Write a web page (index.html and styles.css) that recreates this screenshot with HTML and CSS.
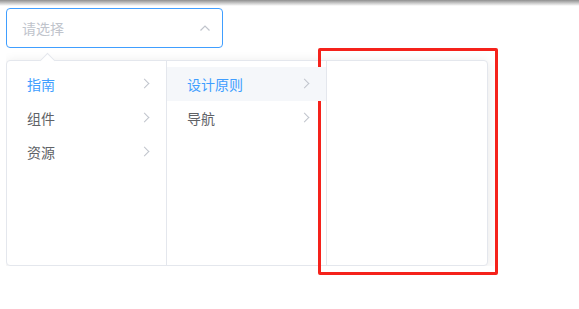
FILE: index.html
```html
<!DOCTYPE html>
<html lang="zh">
<head>
    <meta charset="UTF-8">
    <title>级联选择</title>
    <link rel="stylesheet" href="styles.css">
</head>
<body>
    <div class="top-shade"></div>

    <!-- 选择框 -->
    <div class="cascader">
        <div class="cascader-input">
            <span class="placeholder">请选择</span>
            <svg class="caret" width="14" height="14" viewBox="0 0 14 14">
                <path d="M2.5 9.5 L7 5 L11.5 9.5" fill="none" stroke="#c0c4cc" stroke-width="1.2"/>
            </svg>
        </div>

        <!-- 下拉面板 -->
        <div class="cascader-panel">
            <div class="popper-arrow"></div>
            <ul class="menu">
                <li class="node active">指南<i class="postfix"></i></li>
                <li class="node">组件<i class="postfix"></i></li>
                <li class="node">资源<i class="postfix"></i></li>
            </ul>
            <ul class="menu">
                <li class="node active hover">设计原则<i class="postfix"></i></li>
                <li class="node">导航<i class="postfix"></i></li>
            </ul>
            <ul class="menu last"></ul>
        </div>
    </div>

    <!-- 标注框 -->
    <div class="mark"></div>
</body>
</html>
```

FILE: styles.css
```css
body {
    margin: 8px 6px;
    font-family: "Helvetica Neue", "Noto Sans CJK SC", sans-serif;
    font-size: 14px;
    background: #fff;
}

.top-shade {
    position: fixed;
    top: 0; left: 0; right: 0;
    height: 6px;
    background: linear-gradient(#8f8f8f, rgba(255,255,255,0));
}

.cascader { width: 482px; }

.cascader-input {
    box-sizing: border-box;
    width: 217px;
    height: 40px;
    border: 1px solid #409eff;
    border-radius: 4px;
    display: flex;
    align-items: center;
    justify-content: space-between;
    padding: 0 10px 0 15px;
}
.placeholder { color: #c0c4cc; }
.caret { display: block; margin-top: -1px; }

.cascader-panel {
    position: relative;
    margin-top: 12px;
    display: flex;
    border: 1px solid #e4e7ed;
    border-radius: 4px;
    background: #fff;
    box-shadow: 0 2px 12px rgba(0,0,0,.1);
}

.popper-arrow {
    position: absolute;
    top: -6px;
    left: 35px;
    width: 10px;
    height: 10px;
    background: #fff;
    border-left: 1px solid #e4e7ed;
    border-top: 1px solid #e4e7ed;
    transform: rotate(45deg);
}

.menu {
    list-style: none;
    margin: 0;
    padding: 6px 0;
    width: 159px;
    height: 192px;
    border-right: 1px solid #e4e7ed;
    position: relative;
    z-index: 1;
    background: transparent;
}
.menu.last { width: 160px; border-right: none; }

.node {
    position: relative;
    height: 34px;
    line-height: 34px;
    padding: 0 30px 0 20px;
    color: #606266;
}
.node.active { color: #409eff; }
.node.hover { background: #f5f7fa; }

.postfix {
    position: absolute;
    right: 18px;
    top: 13px;
    width: 6px;
    height: 6px;
    border-right: 1px solid #c0c4cc;
    border-top: 1px solid #c0c4cc;
    transform: rotate(45deg);
}

.mark {
    position: absolute;
    left: 318px;
    top: 48px;
    width: 174px;
    height: 221px;
    border: 3px solid #f5221b;
    border-radius: 2px;
}
```
